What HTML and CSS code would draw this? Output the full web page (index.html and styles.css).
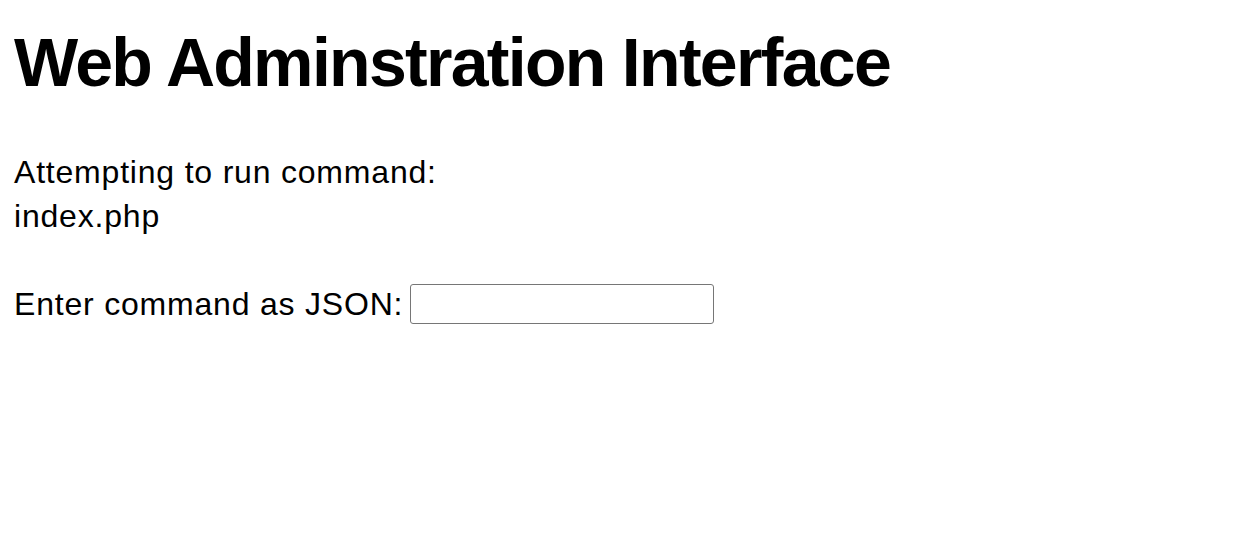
FILE: index.html
```html
<!DOCTYPE html>
<html>
<head>
<meta charset="utf-8">
<link rel="stylesheet" href="styles.css">
</head>
<body>
<h1 class="title">Web Adminstration Interface</h1>
<div class="content">
Attempting to run command:<br>index.php<br><br>
<label class="field">Enter command as JSON: <input class="cmd" type="text"></label>
</div>
</body>
</html>
```
FILE: styles.css
```css
html, body {
  background: #fff;
}
body {
  margin: 0;
  padding: 14px;
  font-family: "Liberation Sans", Arial, sans-serif;
  color: #000;
}
.title {
  font-size: 68px;
  font-weight: bold;
  letter-spacing: -1.7px;
  margin: 0 0 40px 0;
  line-height: 96px;
}
.content {
  font-size: 32px;
  letter-spacing: 0.8px;
  line-height: 44px;
}
.field {
  display: inline-flex;
  align-items: center;
  gap: 7px;
}
.cmd {
  width: 304px;
  height: 40px;
  box-sizing: border-box;
  border: 1px solid #767676;
  border-radius: 3px;
  padding: 0;
  font-size: 20px;
}
```
